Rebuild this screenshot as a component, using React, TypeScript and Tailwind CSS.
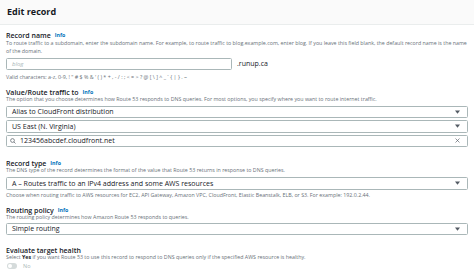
import React, { FC, ReactNode } from "react";

const Label: FC<{ children: ReactNode; info?: boolean; className?: string }> = ({ children, info = true, className = "" }) => (
  <div className={`flex h-[7px] items-center text-[7px] leading-[7px] font-semibold text-[#16191f] ${className}`}>
    <span>{children}</span>
    {info && <span className="ml-[4px] text-[5.3px] leading-[7px] font-bold text-[#0073bb]">Info</span>}
  </div>
);

const Desc: FC<{ children: ReactNode; className?: string }> = ({ children, className = "" }) => (
  <p className={`text-[5.3px] leading-[7px] text-[#687078] ${className}`}>{children}</p>
);

const Arrow = () => (
  <svg width="5" height="4" viewBox="0 0 5 4" className="shrink-0">
    <path d="M0 0.5h5L2.5 3.8z" fill="#545b64" />
  </svg>
);

const Select: FC<{ children: ReactNode; className?: string }> = ({ children, className = "" }) => (
  <div className={`flex h-[12.5px] items-center justify-between rounded-[1.5px] border border-[#aab7b8] pl-[5px] pr-[7px] text-[7px] leading-[9px] text-[#16191f] ${className}`}>
    <span>{children}</span>
    <Arrow />
  </div>
);

const App: FC = () => {
  return (
    <div className="h-[279px] w-[474px] overflow-hidden bg-white font-['Open_Sans',sans-serif]">
      <div className="flex h-[25px] items-center border-b border-[#eaeded] bg-[#fafafa] px-[7px]">
        <h2 className="text-[9px] font-bold text-[#16191f]">Edit record</h2>
      </div>

      <div className="px-[6px]">
        <Label className="mt-[7px]">Record name</Label>
        <Desc className="leading-[8px]">
          To route traffic to a subdomain, enter the subdomain name. For example, to route traffic to blog.example.com, enter blog. If you leave this field blank, the default record name is the name of the domain.
        </Desc>
        <div className="mt-[3px] flex items-center">
          <div className="flex h-[12px] w-[226px] items-center rounded-[1.5px] border border-[#aab7b8] px-[5px] text-[6px] leading-[8px] italic text-[#aab7b8]">
            blog
          </div>
          <span className="ml-[5px] text-[7px] leading-[8px] text-[#16191f]">.runup.ca</span>
        </div>
        <Desc className="mt-[3.5px]">
          Valid characters: a-z, 0-9, ! &quot; # $ % &amp; &apos; ( ) * + , - / : ; &lt; = &gt; ? @ [ \ ] ^ _ ` {"{"} | {"}"} . ~
        </Desc>

        <Label className="mt-[8px]">Value/Route traffic to</Label>
        <Desc>
          The option that you choose determines how Route 53 responds to DNS queries. For most options, you specify where you want to route internet traffic.
        </Desc>
        <div className="mt-[3px] flex flex-col gap-[2px]">
          <Select>Alias to CloudFront distribution</Select>
          <Select>US East (N. Virginia)</Select>
          <div className="flex h-[12.5px] items-center justify-between rounded-[1.5px] border border-[#aab7b8] pl-[3px] pr-[7px] text-[7px] leading-[9px] text-[#16191f]">
            <span className="flex items-center gap-[4px]">
              <svg width="6" height="6" viewBox="0 0 12 12" fill="none" stroke="#545b64" strokeWidth="1.4">
                <circle cx="5" cy="5" r="3.8" />
                <path d="M7.8 7.8L11 11" />
              </svg>
              123456abcdef.cloudfront.net
            </span>
            <svg width="5" height="5" viewBox="0 0 10 10" stroke="#545b64" strokeWidth="1.3">
              <path d="M1 1l8 8M9 1L1 9" />
            </svg>
          </div>
        </div>

        <Label className="mt-[13px]">Record type</Label>
        <Desc>The DNS type of the record determines the format of the value that Route 53 returns in response to DNS queries.</Desc>
        <Select className="mt-[3px]">A – Routes traffic to an IPv4 address and some AWS resources</Select>
        <Desc className="mt-[2px]">
          Choose when routing traffic to AWS resources for EC2, API Gateway, Amazon VPC, CloudFront, Elastic Beanstalk, ELB, or S3. For example: 192.0.2.44.
        </Desc>

        <Label className="mt-[8px]">Routing policy</Label>
        <Desc>The routing policy determines how Amazon Route 53 responds to queries.</Desc>
        <Select className="mt-[2px]">Simple routing</Select>

        <Label info={false} className="mt-[12px]">Evaluate target health</Label>
        <Desc>
          Select <b className="font-bold text-[#16191f]">Yes</b> if you want Route 53 to use this record to respond to DNS queries only if the specified AWS resource is healthy.
        </Desc>
        <div className="mt-[2px] flex h-[6px] items-center gap-[6px] pl-[1px]">
          <div className="flex h-[6px] w-[10px] items-center rounded-full bg-[#d5dbdb] p-[1px]">
            <div className="h-[4px] w-[4px] rounded-full bg-white" />
          </div>
          <span className="text-[5.5px] leading-[6px] text-[#aab7b8]">No</span>
        </div>
      </div>
    </div>
  );
};

export default App;
